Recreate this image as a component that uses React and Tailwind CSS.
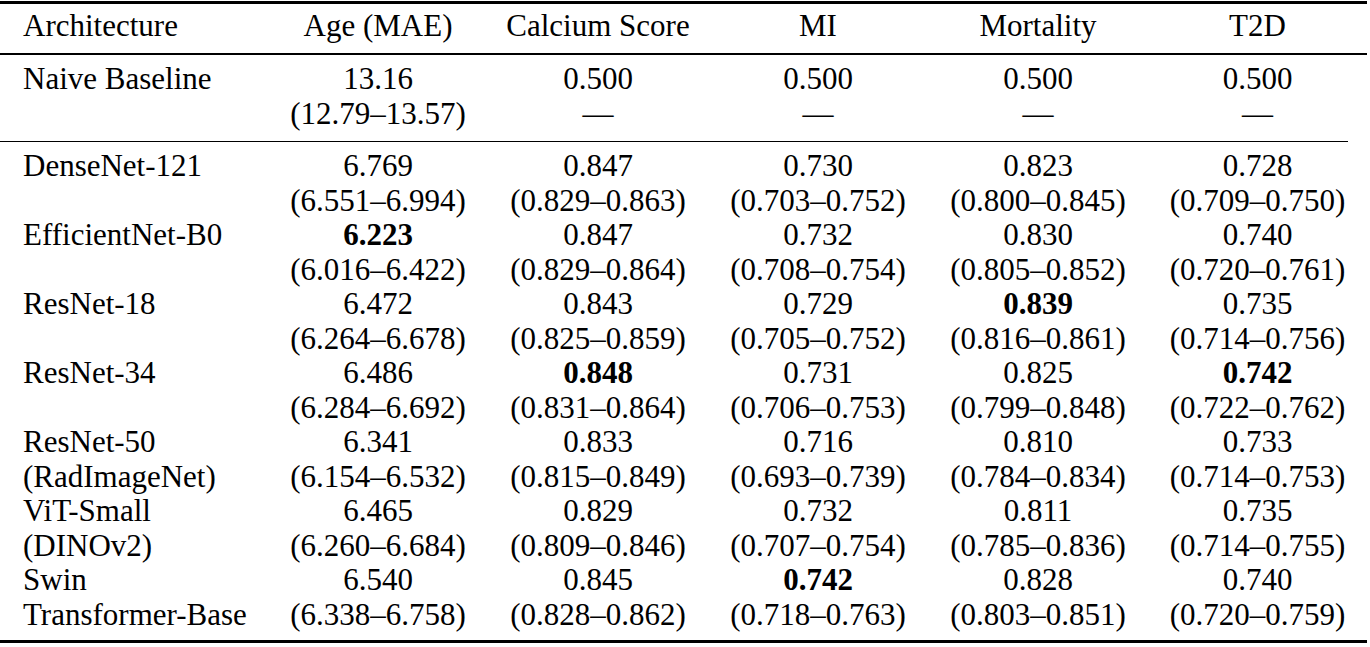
const headers = ["Age (MAE)", "Calcium Score", "MI", "Mortality", "T2D"];

const rows = [
  {
    name: ["DenseNet-121"],
    cells: [
      ["6.769", "(6.551–6.994)"],
      ["0.847", "(0.829–0.863)"],
      ["0.730", "(0.703–0.752)"],
      ["0.823", "(0.800–0.845)"],
      ["0.728", "(0.709–0.750)"],
    ],
  },
  {
    name: ["EfficientNet-B0"],
    cells: [
      ["6.223", "(6.016–6.422)", true],
      ["0.847", "(0.829–0.864)"],
      ["0.732", "(0.708–0.754)"],
      ["0.830", "(0.805–0.852)"],
      ["0.740", "(0.720–0.761)"],
    ],
  },
  {
    name: ["ResNet-18"],
    cells: [
      ["6.472", "(6.264–6.678)"],
      ["0.843", "(0.825–0.859)"],
      ["0.729", "(0.705–0.752)"],
      ["0.839", "(0.816–0.861)", true],
      ["0.735", "(0.714–0.756)"],
    ],
  },
  {
    name: ["ResNet-34"],
    cells: [
      ["6.486", "(6.284–6.692)"],
      ["0.848", "(0.831–0.864)", true],
      ["0.731", "(0.706–0.753)"],
      ["0.825", "(0.799–0.848)"],
      ["0.742", "(0.722–0.762)", true],
    ],
  },
  {
    name: ["ResNet-50", "(RadImageNet)"],
    cells: [
      ["6.341", "(6.154–6.532)"],
      ["0.833", "(0.815–0.849)"],
      ["0.716", "(0.693–0.739)"],
      ["0.810", "(0.784–0.834)"],
      ["0.733", "(0.714–0.753)"],
    ],
  },
  {
    name: ["ViT-Small", "(DINOv2)"],
    cells: [
      ["6.465", "(6.260–6.684)"],
      ["0.829", "(0.809–0.846)"],
      ["0.732", "(0.707–0.754)"],
      ["0.811", "(0.785–0.836)"],
      ["0.735", "(0.714–0.755)"],
    ],
  },
  {
    name: ["Swin", "Transformer-Base"],
    cells: [
      ["6.540", "(6.338–6.758)"],
      ["0.845", "(0.828–0.862)"],
      ["0.742", "(0.718–0.763)", true],
      ["0.828", "(0.803–0.851)"],
      ["0.740", "(0.720–0.759)"],
    ],
  },
];

const grid = "grid grid-cols-[268px_220px_220px_220px_220px_219px]";

function Row({ name, cells }) {
  return (
    <div className={grid}>
      <div className="pl-[23px] whitespace-nowrap">
        {name.map((n) => (
          <div key={n}>{n}</div>
        ))}
      </div>
      {cells.map(([v, ci, bold], i) => (
        <div key={i} className="text-center whitespace-nowrap">
          <div className={bold ? "font-bold" : ""}>{v}</div>
          <div>{ci}</div>
        </div>
      ))}
    </div>
  );
}

export default function App() {
  return (
    <div className="w-[1370px] h-[647px] bg-white">
      <div className="w-[1367px] pt-px text-black font-['Liberation_Serif'] text-[31px] leading-[34.5px]">
        <div className="h-[3px] bg-black" />

        <div className={`${grid} pt-[5px] pb-[9.5px]`}>
          <div className="pl-[23px]">Architecture</div>
          {headers.map((h) => (
            <div key={h} className="text-center whitespace-nowrap">
              {h}
            </div>
          ))}
        </div>
        <div className="h-[2px] bg-black" />

        <div className="pt-[7px] pb-[10px]">
          <Row
            name={["Naive Baseline"]}
            cells={[
              ["13.16", "(12.79–13.57)"],
              ["0.500", "—"],
              ["0.500", "—"],
              ["0.500", "—"],
              ["0.500", "—"],
            ]}
          />
        </div>
        <div className="h-px w-[1348px] bg-black" />

        <div className="pt-[7px] pb-[8px]">
          {rows.map((r) => (
            <Row key={r.name[0]} name={r.name} cells={r.cells} />
          ))}
        </div>
        <div className="h-[3px] bg-black" />
      </div>
    </div>
  );
}
